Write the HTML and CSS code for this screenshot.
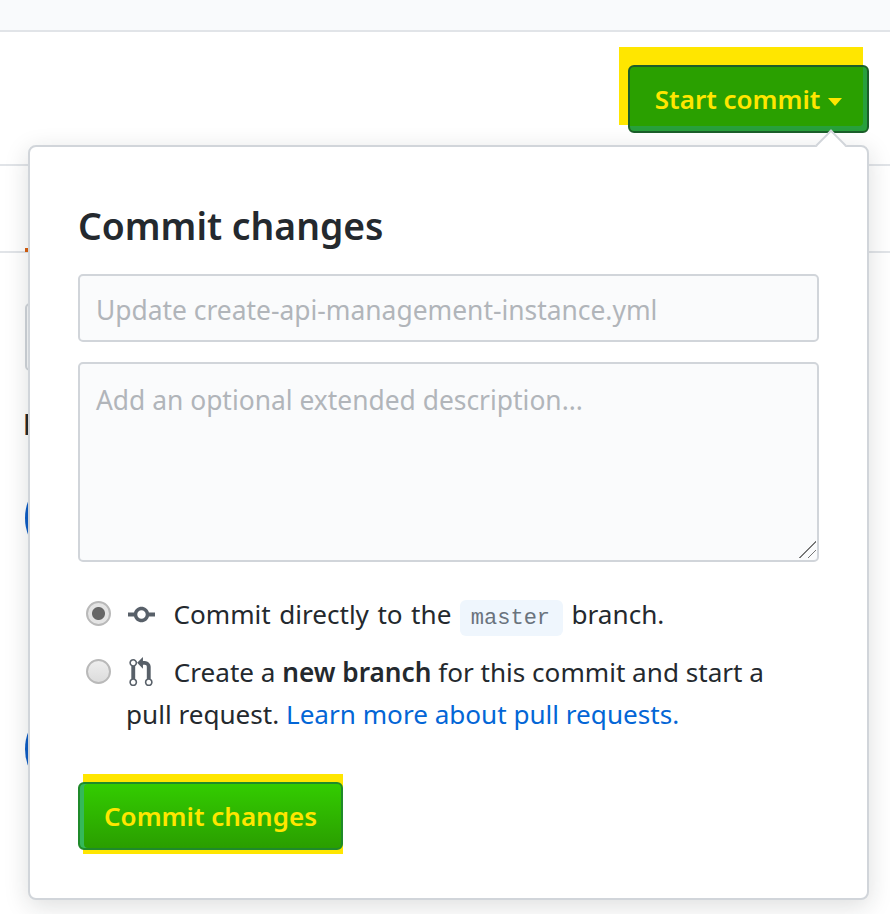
FILE: index.html
```html
<!DOCTYPE html>
<html lang="en">
<head>
    <meta charset="utf-8">
    <title>Commit changes</title>
    <link rel="stylesheet" href="styles.css">
</head>
<body>
<div class="topbar"></div>

<div class="actions">
    <span class="highlight highlight-start"></span>
    <button class="start-commit" type="button">Start commit <span class="caret"></span></button>
</div>

<div class="tabs"><span class="tab-mark"></span></div>

<div class="behind">
    <div class="behind-input"></div>
    <p class="behind-label">Branch</p>
    <div class="avatar"></div>
    <div class="avatar second"></div>
    <div class="behind-foot"><span class="foot-block"></span></div>
</div>

<form class="popup">
    <span class="popup-arrow"></span>
    <h3>Commit changes</h3>
    <input class="field" type="text" placeholder="Update create-api-management-instance.yml">
    <textarea class="field message" placeholder="Add an optional extended description..."></textarea>

    <div class="choices">
        <label class="choice choice-direct">
            <input type="radio" name="target" checked>
            <span>
                <svg class="icon icon-commit" viewBox="0 0 14 16"><path fill-rule="evenodd" d="M10.86 7c-.45-1.72-2-3-3.86-3-1.86 0-3.41 1.28-3.86 3H0v2h3.14c.45 1.72 2 3 3.86 3 1.86 0 3.41-1.28 3.86-3H14V7h-3.14zM7 10.2c-1.22 0-2.2-.98-2.2-2.2 0-1.22.98-2.2 2.2-2.2 1.22 0 2.2.98 2.2 2.2 0 1.22-.98 2.2-2.2 2.2z"/></svg>
                Commit directly to the <code>master</code> branch.
            </span>
        </label>
        <label class="choice">
            <input type="radio" name="target">
            <span>
                <svg class="icon icon-pull" viewBox="0 0 12 16"><path fill-rule="evenodd" d="M11 11.28V5c-.03-.78-.34-1.47-.94-2.06C9.46 2.35 8.78 2.03 8 2H7V0L4 3l3 3V4h1c.27.02.48.11.69.31.21.2.3.42.31.69v6.28A1.993 1.993 0 0 0 10 15a1.993 1.993 0 0 0 1-3.72zm-1 2.92c-.66 0-1.2-.55-1.2-1.2 0-.65.55-1.2 1.2-1.2.65 0 1.2.55 1.2 1.2 0 .65-.55 1.2-1.2 1.2zM4 3c0-1.11-.89-2-2-2a1.993 1.993 0 0 0-1 3.72v6.56A1.993 1.993 0 0 0 2 15a1.993 1.993 0 0 0 1-3.72V4.72c.59-.34 1-.98 1-1.72zm-.8 10c0 .66-.55 1.2-1.2 1.2-.65 0-1.2-.55-1.2-1.2 0-.65.55-1.2 1.2-1.2.65 0 1.2.55 1.2 1.2zM2 4.2C1.34 4.2.8 3.65.8 3c0-.65.55-1.2 1.2-1.2.65 0 1.2.55 1.2 1.2 0 .65-.55 1.2-1.2 1.2z"/></svg>
                Create a <strong>new branch</strong> for this commit and start a pull request. <a href="#">Learn more about pull requests.</a>
            </span>
        </label>
    </div>

    <div class="submit">
        <span class="highlight highlight-submit"></span>
        <button class="commit" type="submit">Commit changes</button>
    </div>
</form>
</body>
</html>
```

FILE: styles.css
```css
html, body {
    height: 914px;
    overflow: hidden;
}

body {
    position: relative;
    margin: 0;
    background: #fff;
    color: #24292e;
    font-family: "Noto Sans", "Open Sans", sans-serif;
    font-size: 26.1px;
}

.topbar {
    height: 30px;
    background: #f9fafc;
    border-bottom: 2px solid #e1e4e8;
}

.actions {
    display: flex;
    justify-content: flex-end;
    box-sizing: border-box;
    height: 134px;
    padding: 33px 21px 0 0;
    border-bottom: 2px solid #e1e4e8;
}

.highlight {
    position: absolute;
    background: #ffe600;
}

.highlight-start {
    top: 47px;
    left: 619px;
    width: 244px;
    height: 78px;
}

.start-commit {
    position: relative;
    box-sizing: border-box;
    width: 241px;
    height: 68px;
    padding: 0;
    border: 2px solid #1b5e2a;
    border-radius: 6px;
    background: #2aa000;
    box-shadow: inset -4px -5px 0 #28a03c;
    color: #ffe600;
    font-family: inherit;
    font-size: 26px;
    font-weight: 600;
}

.caret {
    display: inline-block;
    margin-left: 1px;
    vertical-align: 3px;
    border-style: solid;
    border-width: 8px 7.5px 0;
    border-color: #ffe600 transparent transparent;
}

.tabs {
    position: relative;
    box-sizing: border-box;
    height: 87px;
    border-bottom: 2px solid #e1e4e8;
}

.tab-mark {
    position: absolute;
    bottom: -1px;
    left: 25px;
    width: 6px;
    height: 4px;
    background: #d95f0e;
}

.behind {
    padding: 50px 0 0 25px;
}

.behind-input {
    box-sizing: border-box;
    width: 200px;
    height: 68px;
    border: 2px solid #d1d5da;
    border-radius: 5px;
    background: #fafbfc;
}

.behind-label {
    margin: 33px 0 0 -2px;
    font-size: 29px;
    font-weight: 700;
    line-height: 40px;
}

.avatar {
    width: 94px;
    height: 94px;
    margin-top: 27px;
    border-radius: 50%;
    background: #0d5cc5;
}

.avatar.second {
    margin-top: 137px;
}

.behind-foot {
    display: flex;
    justify-content: flex-end;
    margin: 127px 0 0;
}

.foot-block {
    width: 29px;
    height: 20px;
    margin-right: 27px;
    background: #e8e9ea;
}

.popup {
    position: absolute;
    top: 145px;
    left: 28px;
    box-sizing: border-box;
    width: 841px;
    height: 755px;
    padding: 52px 48px 0;
    border: 2px solid #d1d5da;
    border-radius: 8px;
    background: #fff;
    box-shadow: 0 6px 24px rgba(27, 31, 35, .15);
}

.popup-arrow {
    position: absolute;
    top: -13px;
    right: 25px;
    width: 20px;
    height: 20px;
    border-top: 2px solid #d1d5da;
    border-left: 2px solid #d1d5da;
    background: #fff;
    transform: rotate(45deg);
}

h3 {
    margin: 0 0 22px;
    font-size: 37.3px;
    font-weight: 600;
    line-height: 53px;
}

.field {
    display: block;
    box-sizing: border-box;
    width: 741px;
    height: 68px;
    padding: 3px 16px 0;
    border: 2px solid #d1d5da;
    border-radius: 5px;
    background-color: #fafbfc;
    color: #24292e;
    font-family: inherit;
    font-size: 26.4px;
}

.field::placeholder {
    color: #b1b5ba;
    opacity: 1;
}

.message {
    height: 200px;
    margin-top: 20px;
    padding: 18px 16px 16px;
    line-height: 36px;
    resize: none;
    background-image: linear-gradient(135deg, transparent 0 49%, #777 49% 53%, transparent 53% 74%, #777 74% 78%, transparent 78%);
    background-repeat: no-repeat;
    background-position: right 1px bottom 2px;
    background-size: 17px 17px;
}

.choices {
    margin-top: 31px;
}

.choice {
    display: grid;
    grid-template-columns: 25px 1fr;
    column-gap: 15px;
    width: 709px;
    margin: 0 0 16px 8px;
    line-height: 42px;
}

.choice-direct {
    word-spacing: 1.7px;
}

.choice input {
    appearance: none;
    box-sizing: border-box;
    width: 25px;
    height: 25px;
    margin: 8px 0 0;
    border: 2px solid #b9b9b9;
    border-radius: 50%;
    background: linear-gradient(#eee, #dcdcdc);
}

.choice input:checked {
    background: radial-gradient(circle, #666 0 6px, #e4e4e4 7px);
}

.icon {
    fill: #586069;
    vertical-align: -6px;
}

.icon-commit {
    width: 27px;
    height: 31px;
    margin: 0 10px 0 2px;
}

.icon-pull {
    width: 24px;
    height: 31px;
    margin: 0 14px 0 3px;
}

code {
    padding: 6px 13px 5px 11px;
    border-radius: 6px;
    background: #eff6fd;
    color: #6a737d;
    font-family: "Liberation Mono", monospace;
    font-size: 22px;
    line-height: 1;
}

strong {
    font-size: 26.2px;
    font-weight: 600;
}

a {
    color: #0366d6;
    text-decoration: none;
}

.submit {
    margin-top: 47px;
}

.highlight-submit {
    top: 627px;
    left: 53px;
    width: 260px;
    height: 80px;
}

.commit {
    position: relative;
    box-sizing: border-box;
    width: 265px;
    height: 68px;
    padding: 0;
    border: 2px solid #1f8a2a;
    border-radius: 6px;
    background: linear-gradient(#33cc00, #2a9e00);
    box-shadow: inset 4px 0 0 #35b85a;
    color: #ffe600;
    font-family: inherit;
    font-size: 26px;
    font-weight: 600;
}
```
